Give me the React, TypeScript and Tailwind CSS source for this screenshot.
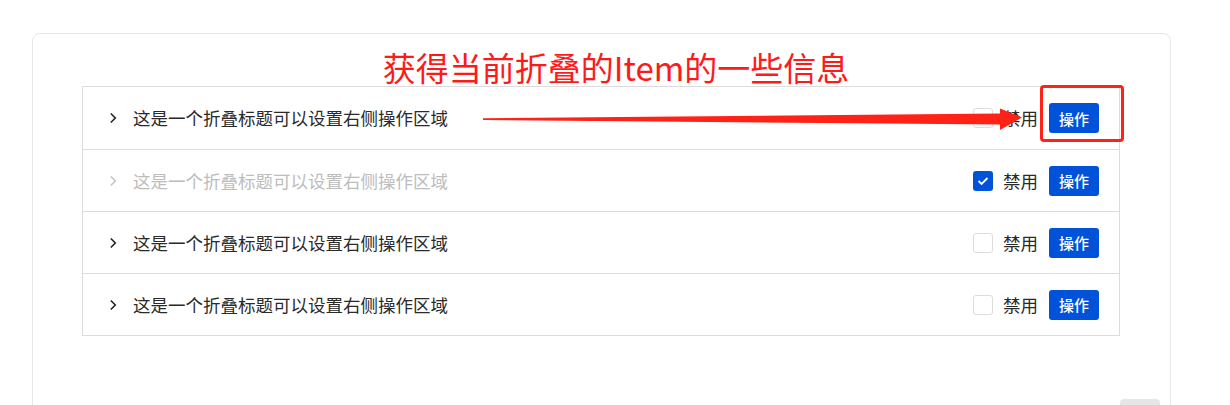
const ROWS = [
  { disabled: false },
  { disabled: true },
  { disabled: false },
  { disabled: false },
];

const FONT = "font-['Noto_Sans_CJK_SC','Noto_Sans',sans-serif]";

function Chevron({ muted }: { muted: boolean }) {
  return (
    <svg width="8" height="12" viewBox="0 0 8 12" className="shrink-0">
      <path
        d="M1.8 1.5 L6.3 6 L1.8 10.5"
        fill="none"
        stroke={muted ? "#c4c4c4" : "#222"}
        strokeWidth="1.6"
      />
    </svg>
  );
}

function Checkbox({ checked }: { checked: boolean }) {
  if (checked) {
    return (
      <span className="w-[20px] h-[20px] rounded-[3px] bg-[#0052d9] flex items-center justify-center shrink-0">
        <svg width="12" height="10" viewBox="0 0 12 10">
          <path d="M1.5 5 L4.6 8 L10.5 2" fill="none" stroke="#fff" strokeWidth="1.8" />
        </svg>
      </span>
    );
  }
  return <span className="w-[20px] h-[20px] rounded-[3px] border border-[#dcdcdc] bg-white shrink-0" />;
}

function CollapseRow({ disabled, first }: { disabled: boolean; first: boolean }) {
  return (
    <div
      className={`h-[62px] flex items-center pl-[26px] pr-[20px] border-[#dcdcdc] ${first ? "" : "border-t"}`}
    >
      <Chevron muted={disabled} />
      <span className={`ml-[16px] text-[17.5px] leading-none ${disabled ? "text-[#bdbdbd]" : "text-[#2a2a2a]"}`}>
        这是一个折叠标题可以设置右侧操作区域
      </span>
      <div className="ml-auto flex items-center">
        <Checkbox checked={disabled} />
        <span className="ml-[10px] text-[17.5px] leading-none text-[#2a2a2a]">禁用</span>
        <button className="ml-[11px] w-[50px] h-[30px] rounded-[3px] bg-[#0052d9] text-white text-[15px] font-medium leading-none">
          操作
        </button>
      </div>
    </div>
  );
}

export default function App() {
  return (
    <div className={`relative w-[1230px] h-[405px] overflow-hidden bg-white pt-[33px] pl-[32px] ${FONT}`}>
      <div className="w-[1139px] h-[420px] border border-[#e6e6e6] rounded-lg pl-[49px] pr-[50px]">
        <div className="h-[52px] flex items-end justify-center pl-[30px]">
          <h1 className="text-[33px] leading-[42px] text-[#ff1a1a] font-normal -mb-[2px]">
            获得当前折叠的Item的一些信息
          </h1>
        </div>
        <div className="border border-[#dcdcdc]">
          {ROWS.map((r, i) => (
            <CollapseRow key={i} disabled={r.disabled} first={i === 0} />
          ))}
        </div>
      </div>

      {/* annotation: arrow */}
      <svg className="absolute left-0 top-0 pointer-events-none" width="1230" height="405">
        <polygon
          points="483,118.3 1000,113.5 1000,108.5 1022,117.5 1000,130 1000,124.5 483,120"
          fill="#ff2216"
        />
      </svg>

      {/* annotation: highlight box */}
      <div className="absolute left-[1040px] top-[85px] w-[84px] h-[57px] border-[3px] border-[#ff2216] rounded-[4px]" />

      {/* back to top stub */}
      <div className="absolute left-[1120px] top-[399px] w-[40px] h-[40px] rounded-[4px] bg-[#e6e6e6]" />
    </div>
  );
}
